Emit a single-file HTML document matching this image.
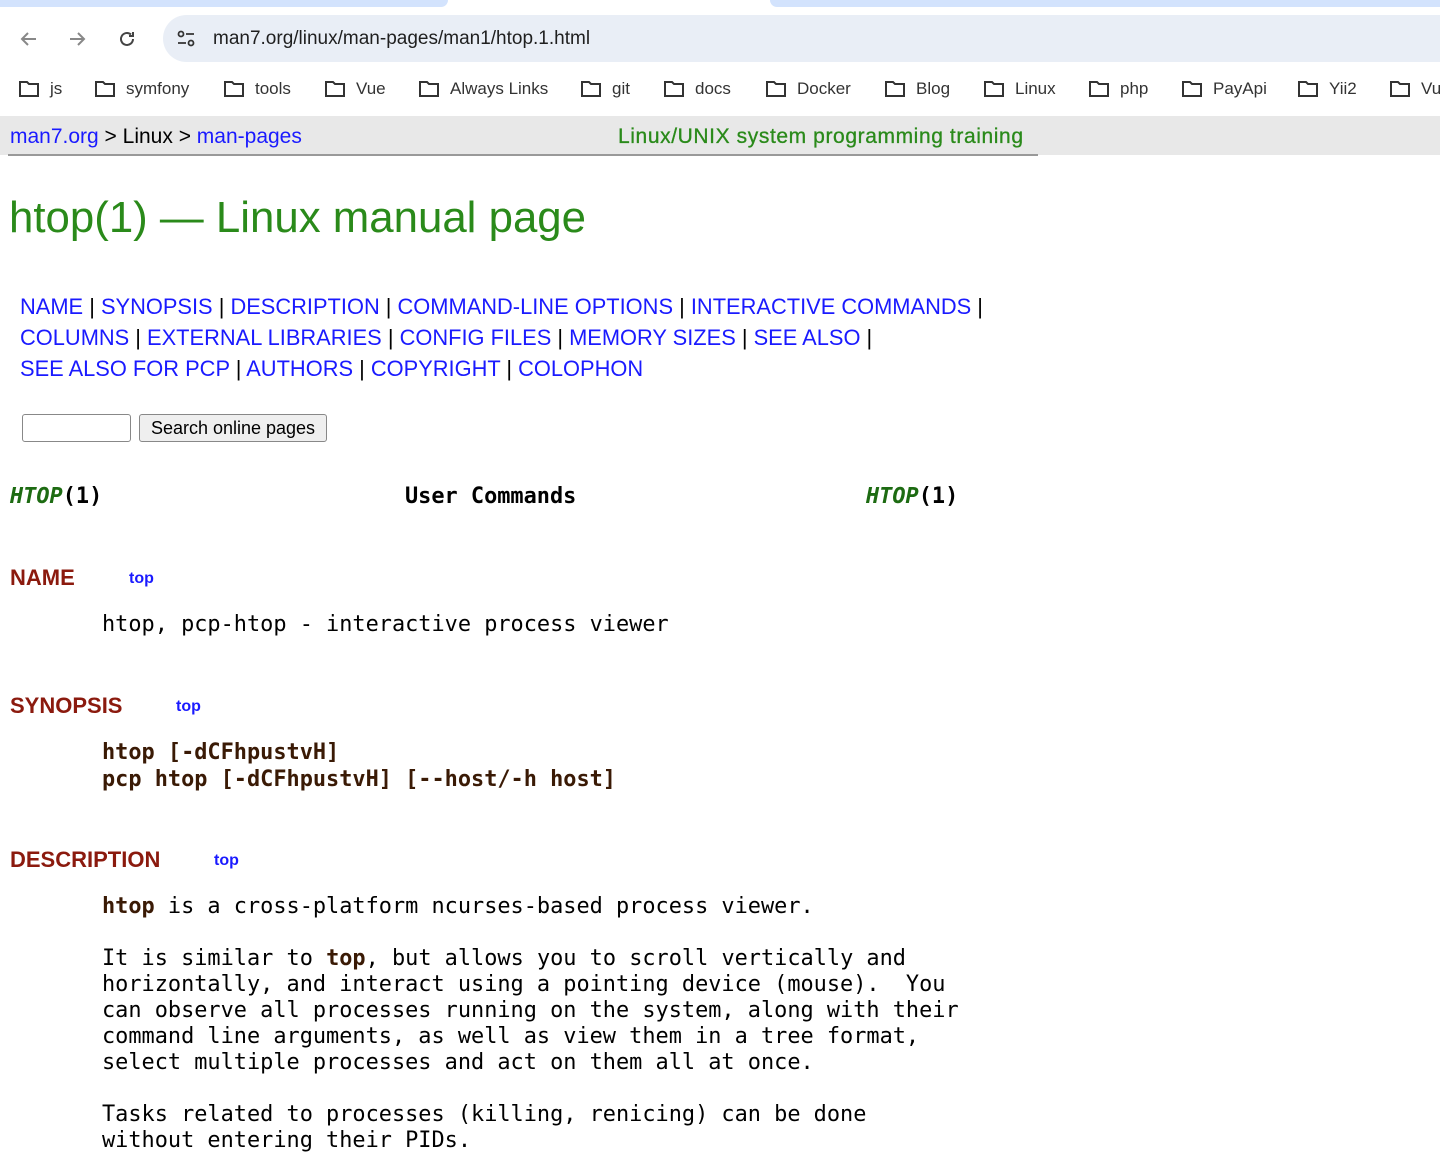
<!DOCTYPE html>
<html><head><meta charset="utf-8">
<style>
*{margin:0;padding:0;box-sizing:border-box}
body{width:1440px;height:1148px;overflow:hidden;background:#fff;font-family:"Liberation Sans",Arial,sans-serif;position:relative}
.abs{position:absolute;white-space:nowrap}
.tabs{position:absolute;left:0;top:0;width:1440px;height:15px;background:#fff}
.tab1{position:absolute;left:0;top:0;width:448px;height:7px;background:#d3e3fd;border-radius:0 0 10px 0}
.tab2{position:absolute;left:770px;top:0;width:670px;height:7px;background:#d3e3fd;border-radius:0 0 0 10px}
.url{position:absolute;left:163px;top:15px;width:1300px;height:47px;background:#e9eef6;border-radius:24px}
.bm{position:absolute;top:79px;font-size:17px;color:#333;display:flex;align-items:center}
.bm svg{margin-right:10px}
.bar{position:absolute;left:0;top:116px;width:1440px;height:39px;background:#e8e8e8}
a{color:#1a1aff;text-decoration:none}
.mono{font-family:"DejaVu Sans Mono","Liberation Mono",monospace;font-size:21.9px;color:#000}
.sec{font-size:22px;font-weight:bold;color:#8b1a0e}
.top{font-size:16px;font-weight:bold;color:#1a1aff}
b.k{color:#3a1a05}
</style></head><body>
<div class="tabs"><div class="tab1"></div><div class="tab2"></div></div>
<svg class="abs" style="left:18px;top:28px" width="22" height="22" viewBox="0 0 22 22"><path d="M18 11H4M10 5l-6 6 6 6" stroke="#888" stroke-width="2" fill="none"/></svg>
<svg class="abs" style="left:66px;top:28px" width="22" height="22" viewBox="0 0 22 22"><path d="M4 11h14M12 5l6 6-6 6" stroke="#888" stroke-width="2" fill="none"/></svg>
<svg class="abs" style="left:116px;top:28px" width="22" height="22" viewBox="0 0 22 22"><path d="M17 11a6 6 0 1 1-2-4.5M17 4v4h-4" stroke="#444" stroke-width="2" fill="none"/></svg>
<div class="url"></div>
<svg class="abs" style="left:176px;top:29px" width="20" height="20" viewBox="0 0 20 20"><circle cx="5" cy="5" r="2.5" stroke="#333" stroke-width="1.8" fill="none"/><path d="M10 5h8M2 14h8" stroke="#333" stroke-width="1.8"/><circle cx="15" cy="14" r="2.5" stroke="#333" stroke-width="1.8" fill="none"/></svg>
<div class="abs" style="left:213px;top:28px;font-size:19px;color:#1f1f1f">man7.org/linux/man-pages/man1/htop.1.html</div>

<div class="bm" style="left:18px"><svg width="22" height="18" viewBox="0 0 22 18"><path d="M2 2h7l2 2h9v12H2z" stroke="#333" stroke-width="2" fill="none"/></svg>js</div>
<div class="bm" style="left:94px"><svg width="22" height="18" viewBox="0 0 22 18"><path d="M2 2h7l2 2h9v12H2z" stroke="#333" stroke-width="2" fill="none"/></svg>symfony</div>
<div class="bm" style="left:223px"><svg width="22" height="18" viewBox="0 0 22 18"><path d="M2 2h7l2 2h9v12H2z" stroke="#333" stroke-width="2" fill="none"/></svg>tools</div>
<div class="bm" style="left:324px"><svg width="22" height="18" viewBox="0 0 22 18"><path d="M2 2h7l2 2h9v12H2z" stroke="#333" stroke-width="2" fill="none"/></svg>Vue</div>
<div class="bm" style="left:418px"><svg width="22" height="18" viewBox="0 0 22 18"><path d="M2 2h7l2 2h9v12H2z" stroke="#333" stroke-width="2" fill="none"/></svg>Always Links</div>
<div class="bm" style="left:580px"><svg width="22" height="18" viewBox="0 0 22 18"><path d="M2 2h7l2 2h9v12H2z" stroke="#333" stroke-width="2" fill="none"/></svg>git</div>
<div class="bm" style="left:663px"><svg width="22" height="18" viewBox="0 0 22 18"><path d="M2 2h7l2 2h9v12H2z" stroke="#333" stroke-width="2" fill="none"/></svg>docs</div>
<div class="bm" style="left:765px"><svg width="22" height="18" viewBox="0 0 22 18"><path d="M2 2h7l2 2h9v12H2z" stroke="#333" stroke-width="2" fill="none"/></svg>Docker</div>
<div class="bm" style="left:884px"><svg width="22" height="18" viewBox="0 0 22 18"><path d="M2 2h7l2 2h9v12H2z" stroke="#333" stroke-width="2" fill="none"/></svg>Blog</div>
<div class="bm" style="left:983px"><svg width="22" height="18" viewBox="0 0 22 18"><path d="M2 2h7l2 2h9v12H2z" stroke="#333" stroke-width="2" fill="none"/></svg>Linux</div>
<div class="bm" style="left:1088px"><svg width="22" height="18" viewBox="0 0 22 18"><path d="M2 2h7l2 2h9v12H2z" stroke="#333" stroke-width="2" fill="none"/></svg>php</div>
<div class="bm" style="left:1181px"><svg width="22" height="18" viewBox="0 0 22 18"><path d="M2 2h7l2 2h9v12H2z" stroke="#333" stroke-width="2" fill="none"/></svg>PayApi</div>
<div class="bm" style="left:1297px"><svg width="22" height="18" viewBox="0 0 22 18"><path d="M2 2h7l2 2h9v12H2z" stroke="#333" stroke-width="2" fill="none"/></svg>Yii2</div>
<div class="bm" style="left:1389px"><svg width="22" height="18" viewBox="0 0 22 18"><path d="M2 2h7l2 2h9v12H2z" stroke="#333" stroke-width="2" fill="none"/></svg>Vue</div>

<div class="bar"></div>
<div class="abs" style="left:8px;top:154px;width:1030px;height:2px;background:#999"></div>
<div class="abs" style="left:10px;top:125px;font-size:21px;color:#000"><a>man7.org</a> &gt; Linux &gt; <a>man-pages</a></div>
<div class="abs" style="left:618px;top:125px;font-size:21px;color:#2a8a1a;letter-spacing:0.6px;-webkit-text-stroke:0.3px #2a8a1a">Linux/UNIX system programming training</div>

<div class="abs" style="left:9px;top:193px;font-size:43.8px;color:#2a8a1a">htop(1) — Linux manual page</div>

<div class="abs" style="left:20px;top:291px;font-size:21.85px;line-height:31px;color:#000">
<a>NAME</a> | <a>SYNOPSIS</a> | <a>DESCRIPTION</a> | <a>COMMAND-LINE OPTIONS</a> | <a>INTERACTIVE COMMANDS</a> |<br>
<a>COLUMNS</a> | <a>EXTERNAL LIBRARIES</a> | <a>CONFIG FILES</a> | <a>MEMORY SIZES</a> | <a>SEE ALSO</a> |<br>
<a>SEE ALSO FOR PCP</a> | <a>AUTHORS</a> | <a>COPYRIGHT</a> | <a>COLOPHON</a></div>

<div class="abs" style="left:22px;top:414px;width:109px;height:28px;border:1px solid #888;border-radius:3px"></div>
<div class="abs" style="left:139px;top:414px;width:188px;height:28px;border:1px solid #888;border-radius:3px;background:#efefef;font-size:18px;text-align:center;line-height:27px">Search online pages</div>

<div class="abs mono" style="left:10px;top:484px;font-weight:bold"><i style="color:#1d6b12">HTOP</i>(1)</div>
<div class="abs mono" style="left:405px;top:484px;font-weight:bold">User Commands</div>
<div class="abs mono" style="left:866px;top:484px;font-weight:bold"><i style="color:#1d6b12">HTOP</i>(1)</div>

<div class="abs sec" style="left:10px;top:565px">NAME</div><div class="abs top" style="left:129px;top:570px">top</div>
<div class="abs mono" style="left:102px;top:612px">htop, pcp-htop - interactive process viewer</div>

<div class="abs sec" style="left:10px;top:693px">SYNOPSIS</div><div class="abs top" style="left:176px;top:698px">top</div>
<div class="abs mono" style="left:102px;top:739px;line-height:27px;font-weight:bold;color:#3a1a05">htop [-dCFhpustvH]<br>pcp htop [-dCFhpustvH] [--host/-h host]</div>

<div class="abs sec" style="left:10px;top:847px">DESCRIPTION</div><div class="abs top" style="left:214px;top:852px">top</div>
<div class="abs mono" style="left:102px;top:894px;line-height:26px;white-space:pre"><b class="k">htop</b> is a cross-platform ncurses-based process viewer.

It is similar to <b class="k">top</b>, but allows you to scroll vertically and
horizontally, and interact using a pointing device (mouse).  You
can observe all processes running on the system, along with their
command line arguments, as well as view them in a tree format,
select multiple processes and act on them all at once.

Tasks related to processes (killing, renicing) can be done
without entering their PIDs.</div>
</body></html>
